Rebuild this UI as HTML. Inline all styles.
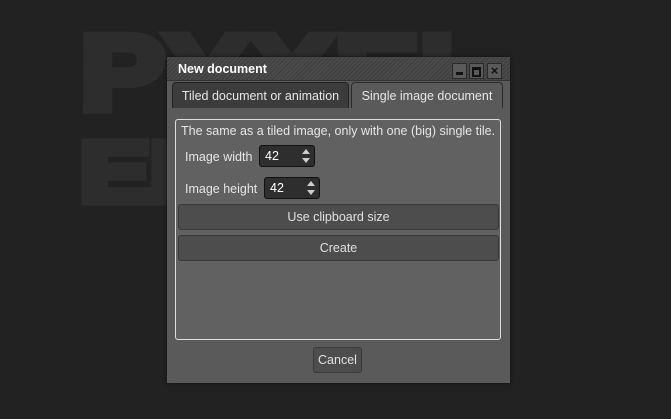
<!DOCTYPE html>
<html><head><style>
body{margin:0;width:671px;height:419px;background:#222;overflow:hidden;position:relative;font-family:"Liberation Sans",sans-serif;}
.bg{position:absolute;font-family:"Liberation Sans",sans-serif;font-weight:700;color:#2d2d2d;-webkit-text-stroke:9px #2d2d2d;line-height:1;transform-origin:0 0;}
.dlg{position:absolute;left:167px;top:57px;width:343px;height:326px;background:#5a5a5a;box-shadow:0 0 4px #111;}
.title{position:absolute;left:0;top:0;width:343px;height:23px;background:repeating-linear-gradient(135deg,#3e3e3e 0 1px,#4a4a4a 1px 3px);border-bottom:1px solid #333;}
.title span{position:absolute;left:11px;top:5px;color:#fff;font-weight:bold;font-size:12.5px;}
.tb{position:absolute;top:6px;width:13px;height:14px;background:#5a5a5a;border:1px solid #2a2a2a;}
.tab{position:absolute;top:25px;height:25px;border:1px solid #222;border-bottom:none;border-radius:4px 4px 0 0;color:#e6e6e6;font-size:12.5px;text-align:center;line-height:26px;}
.panel{position:absolute;left:8px;top:62px;width:324px;height:219px;background:#616161;border:1px solid #ddd;border-radius:3px;}
.t{position:absolute;color:#e6e6e6;font-size:12.5px;}
.spin{position:absolute;width:56px;height:22px;background:#2e2e2e;border:1px solid #111;border-radius:3px;color:#fff;font-size:12.5px;line-height:20px;box-sizing:border-box;padding-left:5px;}
.spin:after{content:"";position:absolute;right:4px;top:3px;border:4px solid transparent;border-bottom:5px solid #ccc;border-top:none;}
.spin:before{content:"";position:absolute;right:4px;bottom:3px;border:4px solid transparent;border-top:5px solid #ccc;border-bottom:none;}
.btn{position:absolute;background:#4d4d4d;border:1px solid #3a3a3a;border-radius:3px;color:#e0e0e0;font-size:12.5px;text-align:center;box-sizing:border-box;}
</style></head><body>
<div class="bg" style="left:80px;top:20px;font-size:106px;transform:scaleX(1.2);">PYXEL</div>
<div class="bg" style="left:80px;top:130px;font-size:84px;transform:scaleX(1.25);">ED</div>
<div class="dlg">
 <div class="title"><span>New document</span>
  <div class="tb" style="left:285px;"><div style="position:absolute;left:3px;top:8px;width:7px;height:3px;background:#111"></div></div>
  <div class="tb" style="left:302px;"><div style="position:absolute;left:2px;top:3px;width:5px;height:5px;border:2px solid #111;border-top-width:3px"></div></div>
  <div class="tb" style="left:320px;"><div style="position:absolute;left:0;top:0;width:13px;text-align:center;font-weight:bold;font-size:13px;line-height:14px;color:#111">×</div></div>
 </div>
 <div class="tab" style="left:5px;width:175px;background:#3c3c3c;">Tiled document or animation</div>
 <div class="tab" style="left:184px;width:150px;background:#5a5a5a;border-color:#2a2a2a;">Single image document</div>
 <div class="panel">
  <div class="t" style="left:5px;top:4px;">The same as a tiled image, only with one (big) single tile.</div>
  <div class="t" style="left:9px;top:30px;">Image width</div>
  <div class="spin" style="left:83px;top:25px;">42</div>
  <div class="t" style="left:9px;top:62px;">Image height</div>
  <div class="spin" style="left:88px;top:57px;">42</div>
  <div class="btn" style="left:2px;top:84px;width:321px;height:26px;line-height:24px;">Use clipboard size</div>
  <div class="btn" style="left:2px;top:115px;width:321px;height:26px;line-height:24px;">Create</div>
 </div>
 <div class="btn" style="left:146px;top:290px;width:49px;height:26px;line-height:24px;">Cancel</div>
</div>
</body></html>
